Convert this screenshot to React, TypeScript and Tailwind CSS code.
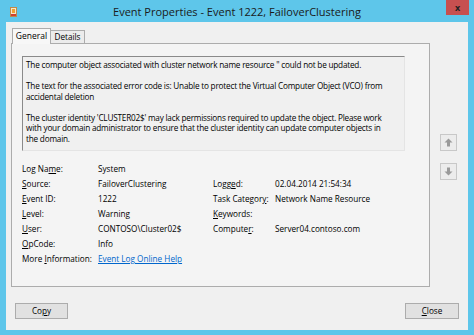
import React from "react";

const font = { fontFamily: '"Open Sans", "Noto Sans", sans-serif' };

function Row({ label, value, rlabel, rvalue, link }: { label: React.ReactNode; value?: React.ReactNode; rlabel?: React.ReactNode; rvalue?: React.ReactNode; link?: boolean }) {
  return (
    <div className="flex h-[15px] items-center whitespace-nowrap">
      <div className="w-[76px]">{label}</div>
      <div className={link ? "w-[115px] text-[#0066cc] underline" : "w-[115px]"}>{value}</div>
      <div className="w-[62px]">{rlabel}</div>
      <div>{rvalue}</div>
    </div>
  );
}

function ArrowBtn({ up }: { up?: boolean }) {
  return (
    <div className="w-[17px] h-[17px] border border-[#c8c8c8] bg-[#ececec] flex items-center justify-center">
      <svg width="9" height="9" viewBox="0 0 9 9">
        {up ? (
          <path d="M4.5 0.5 L8.5 4.5 H6 V8.5 H3 V4.5 H0.5 Z" fill="#9a9a9a" />
        ) : (
          <path d="M4.5 8.5 L8.5 4.5 H6 V0.5 H3 V4.5 H0.5 Z" fill="#9a9a9a" />
        )}
      </svg>
    </div>
  );
}

export default function App() {
  return (
    <div className="w-[474px] h-[335px] bg-[#5ec6ea] flex flex-col overflow-hidden text-black" style={font}>
      <div className="h-[22px] relative flex items-center justify-center shrink-0">
        <div className="absolute left-[10px] top-[7px]">
          <svg width="7" height="10" viewBox="0 0 7 10">
            <rect x="0.5" y="0.5" width="6" height="9" fill="#f4e7c8" stroke="#c08a4a" />
            <rect x="2" y="2" width="3" height="4" fill="#f0a030" />
            <rect x="1" y="7" width="5" height="2" fill="#d04030" />
          </svg>
        </div>
        <span className="text-[11px] text-[#1a1a1a] mt-[2px]">Event Properties - Event 1222, FailoverClustering</span>
        <div className="absolute right-[5px] top-0 w-[23px] h-[15px] bg-[#c75050] flex items-center justify-center">
          <span className="text-[9px] font-bold text-[#222] leading-none">x</span>
        </div>
      </div>
      <div className="flex-1 mx-[6px] mb-[5px] bg-[#f0f0f0] flex flex-col text-[8.2px] leading-[10.5px]">
        <div className="flex pl-[6px] pt-[6px] items-end h-[21px] shrink-0">
          <div className="h-[16px] w-[39px] bg-[#f7f7f7] border border-b-0 border-[#acacac] flex items-center justify-center relative top-[1px] z-10 text-[8.5px]">General</div>
          <div className="h-[13px] w-[34px] bg-[#ececec] border border-l-0 border-b-0 border-[#acacac] flex items-center justify-center">Details</div>
        </div>
        <div className="flex">
          <div className="ml-[5px] w-[419px] h-[244px] border border-[#acacac] bg-[#f4f4f4] pl-[10px] pt-[12px]">
            <div className="w-[383px] h-[95px] border-t border-l border-[#8a8a8a] border-r border-b border-r-[#e4e4e4] border-b-[#e4e4e4] bg-[#f0f0f0] pl-[3px] pt-[3px] whitespace-nowrap overflow-hidden text-[8.2px] tracking-[-0.2px]">
              <p>The computer object associated with cluster network name resource '' could not be updated.</p>
              <p className="mt-[10.5px]">The text for the associated error code is: Unable to protect the Virtual Computer Object (VCO) from</p>
              <p>accidental deletion</p>
              <p className="mt-[10.5px]">The cluster identity 'CLUSTER02$' may lack permissions required to update the object. Please work</p>
              <p>with your domain administrator to ensure that the cluster identity can update computer objects in</p>
              <p>the domain.</p>
            </div>
            <div className="mt-[11px]">
              <Row label={<>Log Na<u>m</u>e:</>} value="System" />
              <Row label={<><u>S</u>ource:</>} value="FailoverClustering" rlabel={<>Logg<u>e</u>d:</>} rvalue="02.04.2014 21:54:34" />
              <Row label={<><u>E</u>vent ID:</>} value="1222" rlabel={<>Task Categor<u>y</u>:</>} rvalue="Network Name Resource" />
              <Row label={<><u>L</u>evel:</>} value="Warning" rlabel={<><u>K</u>eywords:</>} />
              <Row label={<><u>U</u>ser:</>} value="CONTOSO\Cluster02$" rlabel={<>Compute<u>r</u>:</>} rvalue="Server04.contoso.com" />
              <Row label={<><u>O</u>pCode:</>} value="Info" />
              <Row label={<>More <u>I</u>nformation:</>} value="Event Log Online Help" link />
            </div>
          </div>
          <div className="ml-[10px] pt-[91px] flex flex-col gap-[12px]">
            <ArrowBtn up />
            <ArrowBtn />
          </div>
        </div>
        <div className="flex justify-between pl-[9px] pr-[9px] mt-[16px]">
          <div className="w-[53px] h-[16px] border border-[#acacac] bg-[#e1e1e1] flex items-center justify-center">Co<u>p</u>y</div>
          <div className="w-[54px] h-[16px] border border-[#acacac] bg-[#e1e1e1] flex items-center justify-center"><u>C</u>lose</div>
        </div>
      </div>
    </div>
  );
}
